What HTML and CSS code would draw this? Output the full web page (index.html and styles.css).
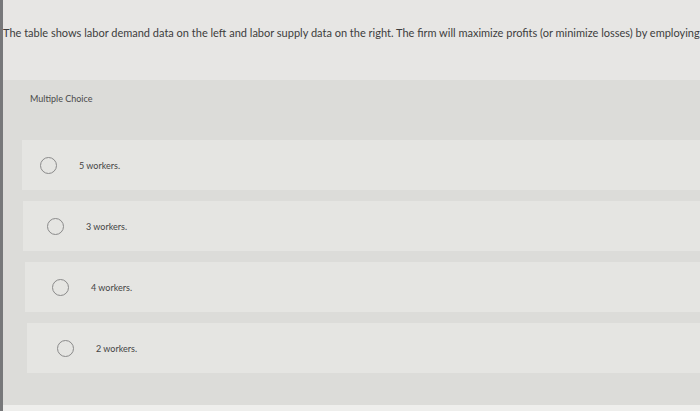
FILE: index.html
```html
<!DOCTYPE html>
<html lang="en">
<head>
<meta charset="utf-8">
<title>Multiple Choice</title>
<link rel="stylesheet" href="styles.css">
</head>
<body>
<div class="page">
  <header class="question">
    <p class="question-text">The table shows labor demand data on the left and labor supply data on the right. The firm will maximize profits (or minimize losses) by employing</p>
  </header>
  <section class="answers">
    <div class="label">Multiple Choice</div>
    <ul class="options">
      <li class="option opt-1"><span class="radio"></span><span class="opt-text">5 workers.</span></li>
      <li class="option opt-2"><span class="radio"></span><span class="opt-text">3 workers.</span></li>
      <li class="option opt-3"><span class="radio"></span><span class="opt-text">4 workers.</span></li>
      <li class="option opt-4"><span class="radio"></span><span class="opt-text">2 workers.</span></li>
    </ul>
  </section>
  <div class="bottom-strip"></div>
</div>
</body>
</html>
```
FILE: styles.css
```css
* { box-sizing: border-box; }
html, body {
  margin: 0;
  padding: 0;
  width: 700px;
  height: 411px;
  overflow: hidden;
  background: #dcdbd8;
  font-family: "Lato", "Liberation Sans", sans-serif;
}
.page {
  display: flex;
  flex-direction: column;
  height: 411px;
  border-left: 3px solid #77787a;
}
.question {
  height: 80px;
  background: #e7e6e4;
  display: flex;
  align-items: center;
  overflow: hidden;
}
.question-text {
  margin: 0 0 16px 0;
  white-space: nowrap;
  font-size: 11px;
  color: #3d3d3d;
}
.answers {
  flex: 1;
  background: #dcdcd9;
  padding: 13px 0 0 0;
}
.label {
  margin-left: 27px;
  font-size: 9px;
  color: #4a4a4a;
  height: 12px;
  line-height: 12px;
}
.options {
  list-style: none;
  margin: 35px 0 0 19px;
  padding: 0;
  display: flex;
  flex-direction: column;
  gap: 11px;
}
.option {
  height: 50px;
  background: #e5e5e2;
  display: flex;
  align-items: center;
  gap: 22px;
}
.opt-1 { padding-left: 18px; }
.opt-2 { padding-left: 24px; margin-left: 1px; }
.opt-3 { padding-left: 27px; margin-left: 3px; }
.opt-4 { padding-left: 30px; margin-left: 5px; }
.radio {
  width: 17px;
  height: 17px;
  border-radius: 50%;
  border: 1.2px solid #8a8a8a;
  flex: none;
}
.opt-text {
  font-size: 9px;
  color: #444;
}
.bottom-strip {
  height: 6px;
  background: #eeeeec;
}
```
